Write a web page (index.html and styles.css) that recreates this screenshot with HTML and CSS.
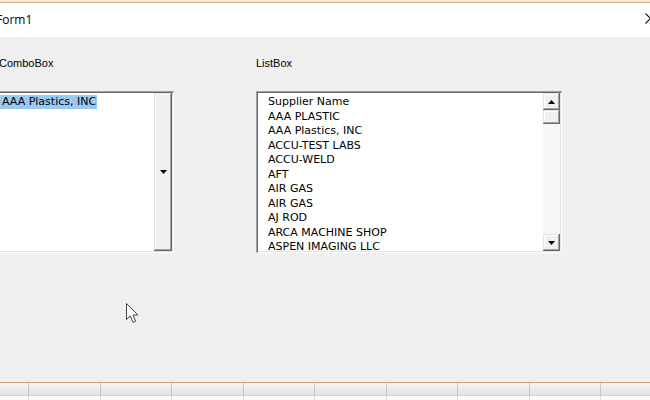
FILE: index.html
```html
<!DOCTYPE html>
<html>
<head>
<meta charset="utf-8">
<link rel="stylesheet" href="styles.css">
</head>
<body>
<div class="desk-top"></div>
<div class="window">
  <div class="titlebar">
    <span class="title">Form1</span>
    <svg class="close" width="11" height="11" viewBox="0 0 11 11"><path d="M0.5 0.5 L10.5 10.5 M10.5 0.5 L0.5 10.5" stroke="#111" stroke-width="1.1" fill="none"/></svg>
  </div>
  <div class="client">
    <div class="group combo-group">
      <div class="label combo-label">ComboBox</div>
      <div class="combo field">
        <div class="combo-text"><span class="sel">AAA Plastics, INC</span></div>
        <div class="drop-btn raised">
          <svg width="7" height="4" viewBox="0 0 7 4"><path d="M0 0 H7 L3.5 4 Z" fill="#000"/></svg>
        </div>
      </div>
    </div>
    <div class="group list-group">
      <div class="label">ListBox</div>
      <div class="listbox field">
        <div class="items">
          <div class="item">Supplier Name</div>
          <div class="item">AAA PLASTIC</div>
          <div class="item">AAA Plastics, INC</div>
          <div class="item">ACCU-TEST LABS</div>
          <div class="item">ACCU-WELD</div>
          <div class="item">AFT</div>
          <div class="item">AIR GAS</div>
          <div class="item">AIR GAS</div>
          <div class="item">AJ ROD</div>
          <div class="item">ARCA MACHINE SHOP</div>
          <div class="item">ASPEN IMAGING LLC</div>
        </div>
        <div class="vscroll">
          <div class="sb-btn raised"><svg width="7" height="4" viewBox="0 0 7 4"><path d="M0 4 H7 L3.5 0 Z" fill="#000"/></svg></div>
          <div class="sb-thumb raised"></div>
          <div class="sb-track"></div>
          <div class="sb-btn raised"><svg width="7" height="4" viewBox="0 0 7 4"><path d="M0 0 H7 L3.5 4 Z" fill="#000"/></svg></div>
        </div>
      </div>
    </div>
    <svg class="cursor" width="13" height="21" viewBox="0 0 13 21"><path d="M0.5 0.5 L0.5 16.5 L4.3 12.9 L7.0 19.3 L9.6 18.2 L7.0 12.0 L12.0 12.0 Z" fill="#fff" stroke="#444" stroke-width="1" stroke-linejoin="miter"/></svg>
  </div>
</div>
<div class="sheet">
  <div class="sheet-row head">
    <div class="cell first"></div><div class="cell"></div><div class="cell"></div><div class="cell"></div><div class="cell"></div><div class="cell"></div><div class="cell"></div><div class="cell"></div><div class="cell"></div><div class="cell"></div>
  </div>
  <div class="sheet-row body-row">
    <div class="cell first"></div><div class="cell"></div><div class="cell"></div><div class="cell"></div><div class="cell"></div><div class="cell"></div><div class="cell"></div><div class="cell"></div><div class="cell"></div><div class="cell"></div>
  </div>
</div>
</body>
</html>
```
FILE: styles.css
```css
html, body {
  margin: 0;
  padding: 0;
}
body {
  width: 650px;
  height: 400px;
  overflow: hidden;
  background: #f0f0f0;
  font-family: "Liberation Sans", Arial, sans-serif;
}
.desk-top {
  height: 2px;
  background: #ececec;
}
.window {
  border-top: 1px solid #dba977;
  border-bottom: 1px solid #cda27a;
}
.titlebar {
  height: 34px;
  background: #ffffff;
  display: flex;
  align-items: center;
  justify-content: space-between;
  overflow: hidden;
}
.title {
  margin-left: -4px;
  margin-top: -2px;
  font-family: "Open Sans", "Noto Sans", sans-serif;
  font-size: 12px;
  color: #000;
}
.close {
  margin-right: -6px;
  margin-top: -3px;
  flex: none;
}
.client {
  position: relative;
  height: 345px;
  background: #f0f0f0;
  padding-top: 20px;
  box-sizing: border-box;
  display: flex;
}
.group {
  display: flex;
  flex-direction: column;
}
.combo-group {
  margin-left: -20px;
  width: 194px;
}
.list-group {
  margin-left: 82px;
  width: 306px;
}
.label {
  font-size: 11px;
  line-height: 13px;
  height: 13px;
  color: #000;
  margin-bottom: 21px;
}
.combo-label {
  padding-left: 19px;
}
.field {
  box-sizing: border-box;
  height: 162px;
  padding: 2px;
  background: #fff;
  box-shadow: inset 1px 1px #a0a0a0, inset -1px -1px #ffffff, inset 2px 2px #696969, inset -2px -2px #e3e3e3;
  display: flex;
}
.raised {
  box-sizing: border-box;
  background: #f0f0f0;
  box-shadow: inset -1px -1px #696969, inset 1px 1px #e3e3e3, inset -2px -2px #a0a0a0, inset 2px 2px #ffffff;
  display: flex;
  align-items: center;
  justify-content: center;
}
.combo-text {
  flex: 1;
  padding-top: 2px;
  padding-left: 18px;
  font-family: "DejaVu Sans", sans-serif;
  font-size: 11px;
  line-height: 14px;
}
.sel {
  background: #99c9ef;
  color: #000;
  padding: 0 1px 0 2px;
  display: inline-block;
  height: 14px;
}
.drop-btn {
  width: 18px;
  flex: none;
}
.items {
  flex: 1;
  padding: 2px 0 0 10px;
  font-family: "DejaVu Sans", sans-serif;
  font-size: 11px;
  color: #000;
}
.item {
  height: 14.5px;
  line-height: 14.5px;
  white-space: nowrap;
}
.vscroll {
  width: 17px;
  flex: none;
  display: flex;
  flex-direction: column;
}
.sb-btn {
  height: 17px;
  flex: none;
}
.sb-thumb {
  height: 14px;
  flex: none;
}
.sb-track {
  flex: 1;
  background: repeating-conic-gradient(#f3f3f3 0 25%, #fbfbfb 0 50%) 0 0 / 2px 2px;
}
.cursor {
  position: absolute;
  left: 126px;
  top: 266px;
}
.sheet {
  height: 17px;
  background: #fafafa;
}
.sheet-row {
  display: flex;
}
.head {
  height: 12px;
  background: linear-gradient(#f5f5f5, #e3e3e3);
  border-bottom: 1px solid #d0d0d0;
}
.body-row {
  height: 4px;
  background: #fbfbfb;
}
.cell {
  flex: none;
  width: 71.5px;
  box-sizing: border-box;
  border-right: 1px solid #c8c8c8;
}
.cell.first {
  width: 29px;
}
.body-row .cell {
  border-right-color: #d9d9d9;
}
```
